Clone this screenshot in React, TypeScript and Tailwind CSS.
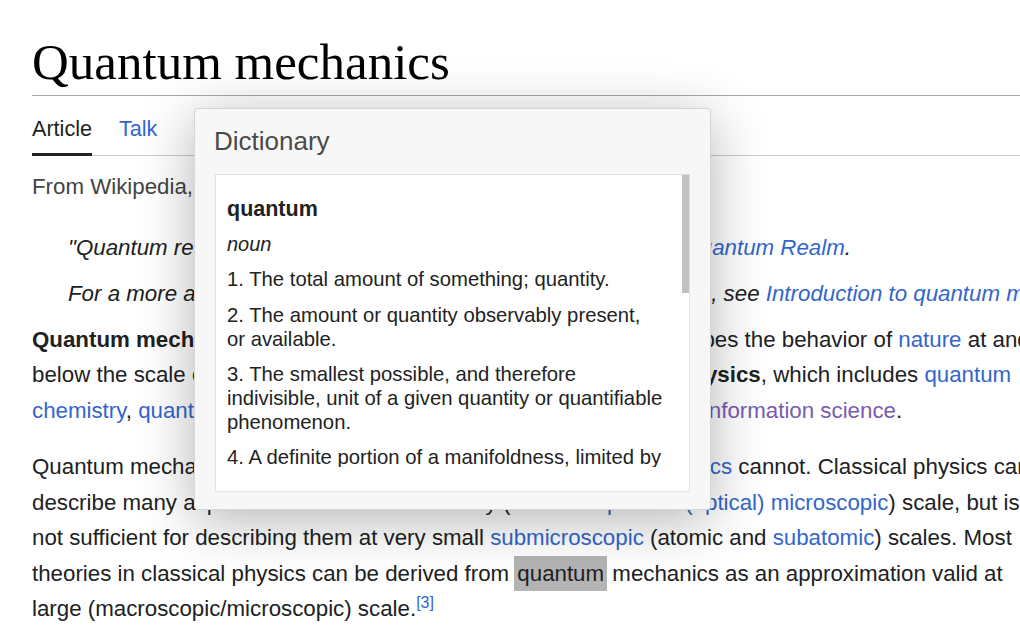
import React from "react";

const A = ({ children, v, className }: { children: React.ReactNode; v?: boolean; className?: string }) => (
  <span className={(v ? "text-[#795cb2]" : "text-[#3366cc]") + (className ? " " + className : "")}>{children}</span>
);

export default function App() {
  return (
    <div
      className="relative w-[1020px] h-[638px] overflow-hidden bg-white text-[#202122]"
      style={{ fontFamily: '"Liberation Sans", Arial, sans-serif' }}
    >
      <div className="pl-[32px]">
        <h1
          className="mt-[37px] pb-[7px] border-b border-[#a2a9b1] text-[51px] leading-[51px] text-black whitespace-nowrap"
          style={{ fontFamily: '"Liberation Serif", "Times New Roman", serif' }}
        >
          Quantum mechanics
        </h1>

        <div className="flex items-start gap-[27px] h-[60px] border-b border-[#c8ccd1] text-[21.6px] leading-[24px]">
          <div className="h-[60px] pt-[21px] border-b-[3px] border-[#202122]">Article</div>
          <div className="h-[60px] pt-[21px] text-[#3366cc]">Talk</div>
        </div>

        <div className="text-[22.3px] leading-[35.5px] whitespace-nowrap">
          <div className="mt-[13px] text-[#444]">From Wikipedia, the free encyclopedia</div>

          <div className="mt-[25px] pl-[36px] italic">
            "Quantum realm" redirects here. For the fictional location, see <A>Quantum Realm</A>.
          </div>
          <div className="mt-[11px] pl-[36px] italic">
            For a more accessible and less technical introduction to this topic, see{" "}
            <A>Introduction to quantum mechanics</A>.
          </div>

          <div className="mt-[10px]">
            <div>
              <b>Quantum mechanics</b> is a fundamental theory in physics that describes the behavior of{" "}
              <A>nature</A> at and
            </div>
            <div>
              below the scale of <A>atoms</A>.<sup className="text-[15px] text-[#3366cc]">[2]: 1.1</sup>{"  "}It
              is the foundation of all <b>quantum physics</b>, which includes <A>quantum</A>
            </div>
            <div>
              <A>chemistry</A>, <A>quantum field theory</A>, <A>quantum technology</A>, and{" "}
              <A v className="ml-[5px]">quantum information science</A>.
            </div>
          </div>

          <div className="mt-[21px]">
            <div>
              Quantum mechanics can describe many systems that <A>classical physics</A> cannot. Classical physics can
            </div>
            <div>
              describe many aspects of nature at an ordinary (<A>macroscopic</A> and <A>(optical) microscopic</A>)
              scale, but is
            </div>
            <div>
              not sufficient for describing them at very small <A>submicroscopic</A> (atomic and <A>subatomic</A>)
              scales. Most
            </div>
            <div>
              theories in classical physics can be derived from{" "}
              <span className="inline-block bg-[#b4b4b4] px-[3px] -mx-[1px]">quantum</span> mechanics as an
              approximation valid at
            </div>
            <div>
              large (macroscopic/microscopic) scale.
              <sup className="text-[16px] text-[#3366cc]">[3]</sup>
            </div>
          </div>
        </div>
      </div>

      {/* Dictionary popup */}
      <div className="absolute left-[194px] top-[108px] w-[517px] h-[402px] rounded-[4px] border border-[#d6d6d6] bg-[#f7f7f7] shadow-[0_10px_55px_rgba(0,0,0,0.3)]">
        <div className="pl-[19px] pt-[17px] text-[26px] leading-[30px] text-[#4a4a4a]">Dictionary</div>
        <div className="relative mt-[18px] mx-[20px] h-[318px] bg-white border border-[#e2e2e2]">
          <div className="h-[292px] overflow-hidden pl-[11px] pt-[21px] text-[#222] whitespace-nowrap">
            <div className="text-[21.5px] leading-[26px] font-bold">quantum</div>
            <div className="mt-[10px] text-[20px] leading-[24px] italic">noun</div>
            <div className="mt-[11px] text-[20.3px] leading-[24px]">1. The total amount of something; quantity.</div>
            <div className="mt-[12px] text-[20.3px] leading-[24px]">
              2. The amount or quantity observably present,
              <br />
              or available.
            </div>
            <div className="mt-[11px] text-[20.3px] leading-[24px]">
              3. The smallest possible, and therefore
              <br />
              indivisible, unit of a given quantity or quantifiable
              <br />
              phenomenon.
            </div>
            <div className="mt-[11px] text-[20.3px] leading-[24px]">
              4. A definite portion of a manifoldness, limited by
              <br />
              some mark or boundary.
            </div>
          </div>
          <div className="absolute right-0 top-0 w-[7px] h-[118px] bg-[#c1c1c1]" />
        </div>
      </div>
    </div>
  );
}
